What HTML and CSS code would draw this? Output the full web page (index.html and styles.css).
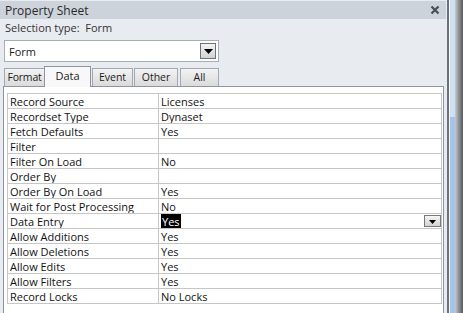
FILE: index.html
```html
<!DOCTYPE html>
<html lang="en">
<head>
    <meta charset="UTF-8">
    <title>Property Sheet</title>
    <link rel="stylesheet" href="styles.css">
</head>
<body>

    <div class="window">
        <!-- Property Sheet pane -->
        <div class="sheet">
            <div class="titlebar">
                <span class="title">Property Sheet</span>
                <svg class="close" width="10" height="10" viewBox="0 0 10 10">
                    <path d="M1.5 1.5 L8.5 8.5 M8.5 1.5 L1.5 8.5" stroke="#4a4d52" stroke-width="2.2"/>
                </svg>
            </div>

            <div class="selection">Selection type:&nbsp; Form</div>

            <div class="combo">
                <span class="combo-text">Form</span>
                <span class="combo-btn">
                    <svg width="9" height="5" viewBox="0 0 9 5"><path d="M0 0 H9 L4.5 5 Z" fill="#000"/></svg>
                </span>
            </div>

            <!-- Tabs -->
            <div class="tabs">
                <div class="tab tab-format">Format</div>
                <div class="tab tab-data active">Data</div>
                <div class="tab tab-event">Event</div>
                <div class="tab tab-other">Other</div>
                <div class="tab tab-all">All</div>
            </div>

            <div class="panel">
                <table class="grid">
                    <tr><td class="label">Record Source</td><td>Licenses</td></tr>
                    <tr><td class="label">Recordset Type</td><td>Dynaset</td></tr>
                    <tr><td class="label">Fetch Defaults</td><td>Yes</td></tr>
                    <tr><td class="label">Filter</td><td></td></tr>
                    <tr><td class="label">Filter On Load</td><td>No</td></tr>
                    <tr><td class="label">Order By</td><td></td></tr>
                    <tr><td class="label">Order By On Load</td><td>Yes</td></tr>
                    <tr><td class="label">Wait for Post Processing</td><td>No</td></tr>
                    <tr>
                        <td class="label">Data Entry</td>
                        <td class="editing">
                            <span class="selected">Yes</span>
                            <span class="cell-btn">
                                <svg width="7" height="4" viewBox="0 0 7 4"><path d="M0 0 H7 L3.5 4 Z" fill="#000"/></svg>
                            </span>
                        </td>
                    </tr>
                    <tr><td class="label">Allow Additions</td><td>Yes</td></tr>
                    <tr><td class="label">Allow Deletions</td><td>Yes</td></tr>
                    <tr><td class="label">Allow Edits</td><td>Yes</td></tr>
                    <tr><td class="label">Allow Filters</td><td>Yes</td></tr>
                    <tr><td class="label">Record Locks</td><td>No Locks</td></tr>
                </table>
            </div>
        </div>

        <!-- Window frame / scrollbar edge -->
        <div class="edge">
            <div class="edge-line"></div>
            <div class="edge-track">
                <div class="edge-top"></div>
                <div class="edge-thumb"></div>
            </div>
            <div class="edge-shade"></div>
        </div>
    </div>

</body>
</html>
```

FILE: styles.css
```css
/* Basic Reset */
* {
    margin: 0;
    padding: 0;
    box-sizing: border-box;
}

body {
    font-family: "Open Sans", "Noto Sans", sans-serif;
    font-size: 11px;
    color: #1b1b1b;
    background-color: #e8ebf0;
    width: 463px;
    height: 313px;
    overflow: hidden;
}

.window {
    display: flex;
    height: 313px;
}

/* Sheet */
.sheet {
    width: 446px;
    height: 313px;
    background-color: #e8ebf0;
    display: flex;
    flex-direction: column;
}

.titlebar {
    margin-top: 1px;
    height: 18px;
    background-color: #cdd3da;
    display: flex;
    justify-content: space-between;
    align-items: center;
    padding: 0 5px 0 5px;
}

.title {
    font-size: 12px;
    color: #2a2a2a;
}

.close {
    margin-right: 1px;
}

.selection {
    height: 17px;
    line-height: 17px;
    padding-left: 5px;
    color: #333;
}

/* Combo */
.combo {
    margin: 4px 0 0 4px;
    width: 215px;
    height: 22px;
    background-color: #fff;
    border: 1px solid #a7adb5;
    display: flex;
    align-items: center;
    justify-content: space-between;
    padding: 0 2px 0 4px;
}

.combo-btn {
    width: 16px;
    height: 16px;
    border: 1px solid #6f7378;
    background: linear-gradient(#f4f4f4, #d3d3d3);
    display: flex;
    align-items: center;
    justify-content: center;
    padding-top: 1px;
}

/* Tabs */
.tabs {
    margin-top: 4px;
    height: 20px;
    display: flex;
    align-items: flex-end;
    padding-left: 4px;
    position: relative;
    z-index: 1;
}

.tab {
    height: 18px;
    line-height: 17px;
    font-size: 10.5px;
    text-align: center;
    border: 1px solid #a2a9b2;
    border-bottom: none;
    background: linear-gradient(#f3f3f3, #dadada);
    margin-right: 1px;
}

.tab-format { width: 41px; margin-right: 0; letter-spacing: -0.2px; }
.tab-data   { width: 47px; }
.tab-event  { width: 41px; }
.tab-other  { width: 44px; margin-right: 2px; }
.tab-all    { width: 39px; }

.tab.active {
    height: 21px;
    line-height: 17px;
    font-size: 11px;
    background: #f8f8f8;
    border-color: #8e959e;
    margin-left: -1px;
    margin-bottom: -1px;
    padding-bottom: 3px;
}

/* Panel */
.panel {
    margin-left: 3px;
    width: 441px;
    flex: 1;
    background-color: #fff;
    border: 1px solid #8e959e;
    border-bottom: none;
    padding: 6px 0 0 3px;
}

.grid {
    border-collapse: collapse;
    width: 435px;
    table-layout: fixed;
}

.grid td {
    height: 15px;
    line-height: 13px;
    border: 1px solid #c6c6c6;
    padding: 0 0 0 2px;
    white-space: nowrap;
    overflow: hidden;
    color: #111;
}

.grid td.label {
    width: 151px;
}

.grid td.editing {
    position: relative;
}

.selected {
    background-color: #000;
    color: #fff;
    padding: 0 1px;
}

.cell-btn {
    position: absolute;
    right: 0;
    top: 1px;
    width: 17px;
    height: 12px;
    border: 1px solid #767a80;
    background: linear-gradient(#f6f6f6, #d2d2d2);
    display: flex;
    align-items: center;
    justify-content: center;
    padding-top: 2px;
}

/* Frame edge on the right */
.edge {
    width: 17px;
    display: flex;
    padding-left: 1px;
}

.edge-line {
    width: 2px;
    background-color: #6c7279;
}

.edge-track {
    width: 6px;
    display: flex;
    flex-direction: column;
    border-left: 1px solid #f2f7fc;
}

.edge-top {
    height: 117px;
    background-color: #cfe0f2;
}

.edge-thumb {
    flex: 1;
    background-color: #a6c4e5;
}

.edge-shade {
    flex: 1;
    background: linear-gradient(to right, #c9cacc, #8d8e90 50%, #5c5d60);
}
```
